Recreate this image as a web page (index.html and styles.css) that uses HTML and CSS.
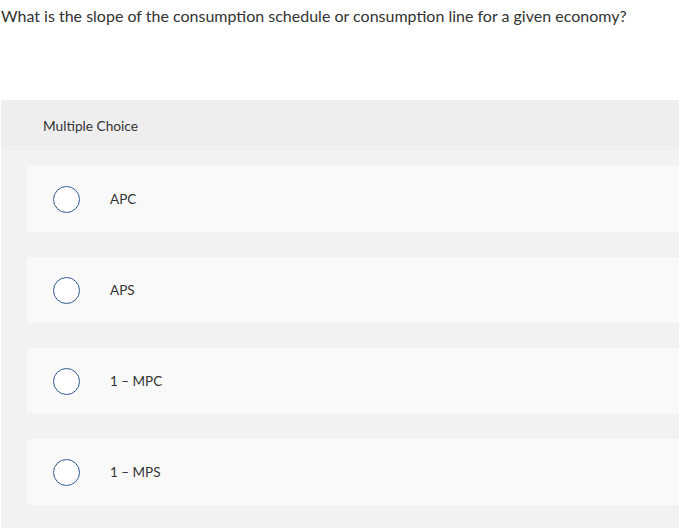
FILE: index.html
```html
<!DOCTYPE html>
<html>
<head>
<meta charset="utf-8">
<link rel="stylesheet" href="styles.css">
</head>
<body>
<p class="question">What is the slope of the consumption schedule or consumption line for a given economy?</p>
<div class="mc">
  <div class="mc-head">Multiple Choice</div>
  <div class="mc-body">
    <div class="opt"><span class="radio"></span><span class="label">APC</span></div>
    <div class="opt"><span class="radio"></span><span class="label">APS</span></div>
    <div class="opt"><span class="radio"></span><span class="label">1 &ndash; MPC</span></div>
    <div class="opt"><span class="radio"></span><span class="label">1 &ndash; MPS</span></div>
  </div>
</div>
</body>
</html>
```
FILE: styles.css
```css
html, body { margin: 0; padding: 0; background: #fff; }
body { font-family: "Lato", "Open Sans", sans-serif; color: #333; }
.question {
  margin: 0;
  padding: 6px 0 0 1px;
  font-size: 16px;
  line-height: 20px;
  height: 100px;
  box-sizing: border-box;
}
.mc {
  margin-left: 1px;
  background: #f2f2f2;
  border-radius: 3px 0 0 0;
  overflow: hidden;
}
.mc-head {
  background: #eeeeee;
  height: 50px;
  display: flex;
  align-items: center;
  padding-left: 42px;
  font-size: 13.7px;
}
.mc-body {
  padding: 16px 0 23px 26px;
  display: flex;
  flex-direction: column;
  gap: 25px;
}
.opt {
  background: #f9f9f9;
  border-radius: 3px 0 0 3px;
  height: 66px;
  display: flex;
  align-items: center;
}
.radio {
  width: 25px;
  height: 25px;
  border: 1.3px solid #2d5a92;
  border-radius: 50%;
  background: #fff;
  margin-left: 26px;
  flex: none;
}
.label {
  margin-left: 30px;
  font-size: 13.5px;
}
```
